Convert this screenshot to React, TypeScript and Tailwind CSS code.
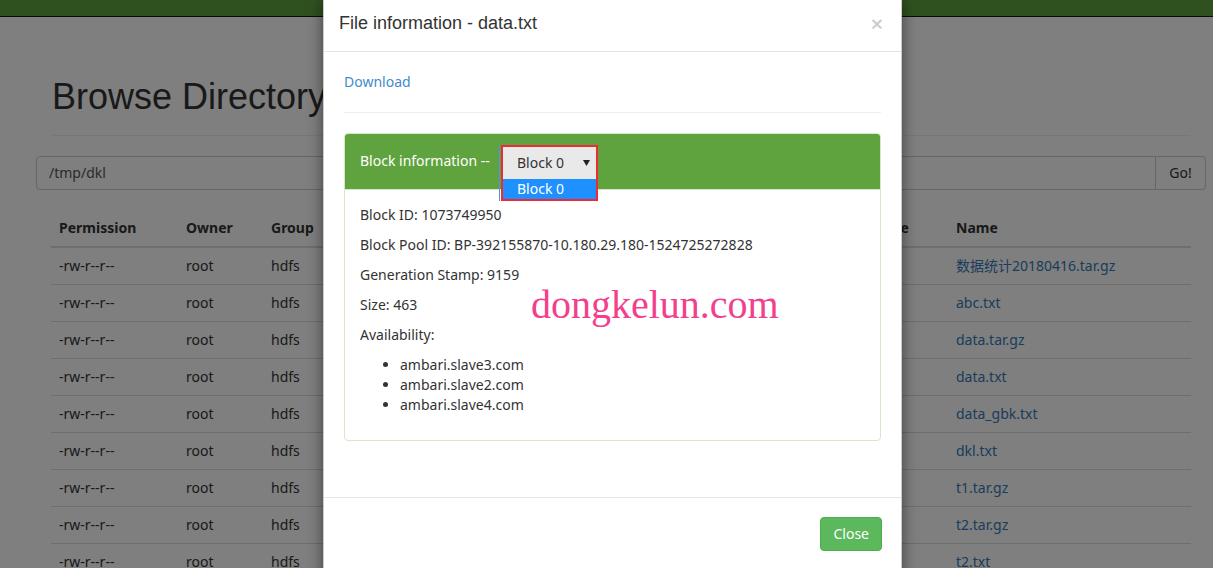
import React from "react";

const rows = [
  { name: "数据统计20180416.tar.gz", size: "1.2 KB", date: "Apr 16 10:21" },
  { name: "abc.txt", size: "12 B", date: "Apr 20 09:12" },
  { name: "data.tar.gz", size: "320 B", date: "Apr 24 15:03" },
  { name: "data.txt", size: "463 B", date: "Apr 26 14:47" },
  { name: "data_gbk.txt", size: "458 B", date: "Apr 26 14:52" },
  { name: "dkl.txt", size: "25 B", date: "Apr 26 15:10" },
  { name: "t1.tar.gz", size: "210 B", date: "Apr 26 15:22" },
  { name: "t2.tar.gz", size: "214 B", date: "Apr 26 15:24" },
  { name: "t2.txt", size: "35 B", date: "Apr 26 15:30" },
];

export default function App() {
  return (
    <div className="relative h-[568px] w-full overflow-hidden bg-white font-['Noto_Sans','Noto_Sans_CJK_SC',sans-serif] text-[14px] leading-[20px] text-[#333]">
      {/* navbar */}
      <nav className="h-[17px] border-b border-[#141414] bg-[#5fa33e]" />

      {/* page header */}
      <div className="ml-[52px] mr-[23px]">
        <h1 className="mt-[60px] font-['Liberation_Sans',Arial,sans-serif] text-[36px] font-normal leading-[40px]">
          Browse Directory
        </h1>
        <hr className="mt-[18px] border-0 border-t border-[#eee]" />
      </div>

      {/* path input group */}
      <div className="ml-[36px] mt-[20px] flex h-[34px] w-[1170px]">
        <div className="flex flex-1 items-center rounded-l-[4px] border border-[#ccc] px-[12px] text-[#555]">
          /tmp/dkl
        </div>
        <div className="-ml-px flex w-[51px] items-center justify-center rounded-r-[4px] border border-[#ccc] bg-white text-[#333]">
          Go!
        </div>
      </div>

      {/* table */}
      <table className="ml-[51px] mt-[20px] w-[1140px] table-fixed border-collapse">
        <thead>
          <tr className="border-b-2 border-[#ddd] text-left">
            <th className="w-[127px] px-[8px] py-[8px] font-bold">Permission</th>
            <th className="w-[85px] px-[8px] py-[8px] font-bold">Owner</th>
            <th className="w-[97px] px-[8px] py-[8px] font-bold">Group</th>
            <th className="w-[110px] px-[8px] py-[8px] font-bold">Size</th>
            <th className="w-[210px] px-[8px] py-[8px] font-bold">Last Modified</th>
            <th className="w-[152px] px-[8px] py-[8px] font-bold">Replication</th>
            <th className="w-[116px] px-[8px] py-[8px] font-bold">Block Size</th>
            <th className="w-[243px] px-[8px] py-[8px] font-bold">Name</th>
          </tr>
        </thead>
        <tbody>
          {rows.map((r) => (
            <tr key={r.name} className="border-t border-[#ddd]">
              <td className="px-[8px] py-[8px]">-rw-r--r--</td>
              <td className="px-[8px] py-[8px]">root</td>
              <td className="px-[8px] py-[8px]">hdfs</td>
              <td className="px-[8px] py-[8px]">{r.size}</td>
              <td className="px-[8px] py-[8px]">{r.date}</td>
              <td className="px-[8px] py-[8px]">3</td>
              <td className="px-[8px] py-[8px]">128 MB</td>
              <td className="whitespace-nowrap px-[8px] py-[8px] text-[#337ab7]">{r.name}</td>
            </tr>
          ))}
        </tbody>
      </table>

      {/* backdrop */}
      <div className="absolute inset-0 bg-black/50" />

      {/* modal */}
      <div className="absolute left-[323px] top-[-6px] w-[579px] rounded-[6px] border border-black/20 bg-white shadow-[0_5px_15px_rgba(0,0,0,0.5)]">
        <div className="flex h-[57px] items-center justify-between border-b border-[#e5e5e5] px-[15px]">
          <h4 className="font-['Liberation_Sans',Arial,sans-serif] text-[18px] font-normal leading-[26px] text-[#333]">
            File information - data.txt
          </h4>
          <span className="mr-[3px] font-['Liberation_Sans',Arial,sans-serif] text-[21px] font-bold leading-none text-black/20">
            ×
          </span>
        </div>

        <div className="px-[20px] pb-[36px] pt-[20px]">
          <a className="block text-[#428bca]">Download</a>
          <hr className="mt-[20px] border-0 border-t border-[#eee]" />

          <div className="mb-[20px] mt-[20px] rounded-[4px] border border-[#d6e9c6]">
            <div className="flex h-[56px] items-center rounded-t-[3px] border-b border-[#d6e9c6] bg-[#5fa33e] px-[15px] text-white">
              <span className="-mt-[2px] w-[139px] whitespace-nowrap">Block information --</span>
              <div className="relative h-[33px] w-[99px]">
                <div className="absolute left-0 top-0 h-[56px] w-px bg-[#5b8fd9]" />
                <div className="absolute left-[4px] top-[2px] flex h-[32px] w-[93px] items-center bg-[#e9e9e9] pl-[14px] text-[#333]">
                  Block 0
                  <svg className="absolute left-[80px] top-[13px]" width="7" height="6" viewBox="0 0 7 6">
                    <polygon points="0,0 7,0 3.5,6" fill="#222" />
                  </svg>
                </div>
                <div className="absolute left-[4px] top-[34px] h-[20px] w-[93px] bg-[#1e90ff] pl-[14px] leading-[20px] text-white">
                  Block 0
                </div>
                <div className="absolute left-[2px] top-0 h-[56px] w-[97px] border-2 border-[#ee2a36]" />
              </div>
            </div>
            <div className="p-[15px]">
              <p className="mb-[10px]">Block ID: 1073749950</p>
              <p className="mb-[10px]">Block Pool ID: BP-392155870-10.180.29.180-1524725272828</p>
              <p className="mb-[10px]">Generation Stamp: 9159</p>
              <p className="mb-[10px]">Size: 463</p>
              <p className="mb-[10px]">Availability:</p>
              <ul className="mb-[10px] list-disc pl-[40px]">
                <li>ambari.slave3.com</li>
                <li>ambari.slave2.com</li>
                <li>ambari.slave4.com</li>
              </ul>
            </div>
          </div>
        </div>

        <div className="flex justify-end border-t border-[#e5e5e5] px-[19px] pb-[40px] pt-[19px]">
          <button className="h-[34px] rounded-[4px] border border-[#4cae4c] bg-[#5cb85c] px-[12px] text-[14px] text-white">
            Close
          </button>
        </div>
      </div>

      {/* watermark */}
      <div className="absolute left-[531px] top-[285px] font-['Liberation_Serif','Times_New_Roman',serif] text-[40px] leading-[40px] text-[#f2408d]">
        dongkelun.com
      </div>
    </div>
  );
}
